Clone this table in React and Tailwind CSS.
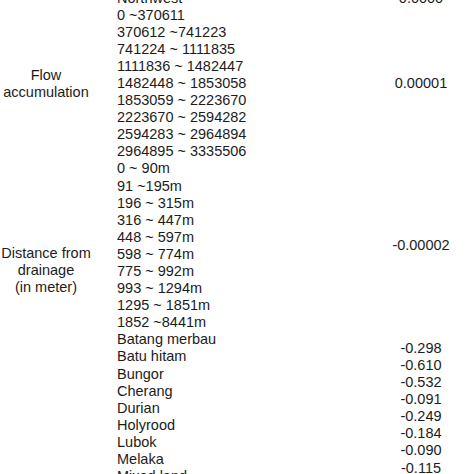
const flowRows = [
  '0 ~370611',
  '370612 ~741223',
  '741224 ~ 1111835',
  '1111836 ~ 1482447',
  '1482448 ~ 1853058',
  '1853059 ~ 2223670',
  '2223670 ~ 2594282',
  '2594283 ~ 2964894',
  '2964895 ~ 3335506',
];

const distanceRows = [
  '0 ~ 90m',
  '91 ~195m',
  '196 ~ 315m',
  '316 ~ 447m',
  '448 ~ 597m',
  '598 ~ 774m',
  '775 ~ 992m',
  '993 ~ 1294m',
  '1295 ~ 1851m',
  '1852 ~8441m',
];

const soilRows = [
  { name: 'Batang merbau', value: '-0.298' },
  { name: 'Batu hitam', value: '-0.610' },
  { name: 'Bungor', value: '-0.532' },
  { name: 'Cherang', value: '-0.091' },
  { name: 'Durian', value: '-0.249' },
  { name: 'Holyrood', value: '-0.184' },
  { name: 'Lubok', value: '-0.090' },
  { name: 'Melaka', value: '-0.115' },
  { name: 'Mixed land', value: '' },
];

function Row({ children }) {
  return <div className="h-[17.1px] leading-[17.1px] whitespace-nowrap">{children}</div>;
}

export default function App() {
  return (
    <div
      className="h-[474px] w-[474px] overflow-hidden bg-white text-[14.5px] text-[#1c1c1c]"
      style={{ fontFamily: '"Liberation Sans", Arial, sans-serif' }}
    >
      <div className="-mt-[10.5px]">
        {/* previous factor, last class */}
        <div className="flex">
          <div className="w-[92px]" />
          <div className="ml-[25px] w-[261px]">
            <Row>Northwest</Row>
          </div>
          <div className="w-[86px] text-center">
            <Row>0.0000</Row>
          </div>
        </div>

        {/* Flow accumulation */}
        <div className="flex">
          <div className="flex w-[92px] flex-col justify-center text-center leading-[17px]">
            <span>Flow</span>
            <span>accumulation</span>
          </div>
          <div className="ml-[25px] w-[261px]">
            {flowRows.map((r) => (
              <Row key={r}>{r}</Row>
            ))}
          </div>
          <div className="flex w-[86px] flex-col justify-center text-center">
            <Row>0.00001</Row>
          </div>
        </div>

        {/* Distance from drainage */}
        <div className="flex">
          <div className="w-[92px] pt-[85px] text-center leading-[17px]">
            <div>Distance from</div>
            <div>drainage</div>
            <div>(in meter)</div>
          </div>
          <div className="ml-[25px] w-[261px]">
            {distanceRows.map((r) => (
              <Row key={r}>{r}</Row>
            ))}
          </div>
          <div className="flex w-[86px] flex-col justify-center text-center">
            <Row>-0.00002</Row>
          </div>
        </div>

        {/* Soil series */}
        <div className="flex">
          <div className="w-[92px]" />
          <div className="ml-[25px] w-[261px]">
            {soilRows.map((r) => (
              <Row key={r.name}>{r.name}</Row>
            ))}
          </div>
          <div className="w-[86px] pt-[8.5px] text-center">
            {soilRows.map((r) => (
              <Row key={r.name}>{r.value}</Row>
            ))}
          </div>
        </div>
      </div>
    </div>
  );
}
